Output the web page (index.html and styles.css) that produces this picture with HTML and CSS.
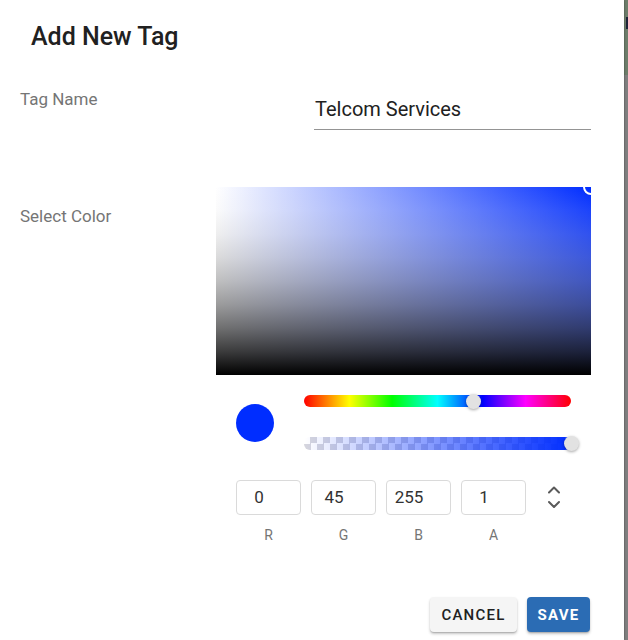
FILE: index.html
```html
<!DOCTYPE html>
<html lang="en">
<head>
<meta charset="utf-8">
<title>Add New Tag</title>
<link rel="stylesheet" href="styles.css">
</head>
<body>
<div class="page">
  <div class="dialog">
    <h2 class="title">Add New Tag</h2>
    <div class="row row-name">
      <div class="label">Tag Name</div>
      <div class="field">Telcom Services</div>
    </div>
    <div class="row row-color">
      <div class="label label-color">Select Color</div>
      <div class="picker">
        <div class="sv"><span class="sv-pointer"></span></div>
        <div class="controls">
          <span class="swatch"></span>
          <div class="sliders">
            <div class="hue"><span class="thumb thumb-hue"></span></div>
            <div class="alpha"><span class="thumb thumb-alpha"></span></div>
          </div>
        </div>
        <div class="inputs">
          <div class="chan"><div class="box">0</div><div class="chan-label">R</div></div>
          <div class="chan"><div class="box">45</div><div class="chan-label">G</div></div>
          <div class="chan"><div class="box">255</div><div class="chan-label">B</div></div>
          <div class="chan"><div class="box">1</div><div class="chan-label">A</div></div>
          <svg class="toggle" width="12" height="22" viewBox="0 0 12 22">
            <path d="M1 6.5 L6 1.5 L11 6.5" fill="none" stroke="#5a5a5a" stroke-width="2" stroke-linecap="round" stroke-linejoin="round"/>
            <path d="M1 16 L6 21 L11 16" fill="none" stroke="#5a5a5a" stroke-width="2" stroke-linecap="round" stroke-linejoin="round"/>
          </svg>
        </div>
      </div>
    </div>
    <div class="actions">
      <button class="btn btn-cancel">Cancel</button>
      <button class="btn btn-save">Save</button>
    </div>
  </div>
  <div class="backdrop"></div>
</div>
</body>
</html>
```

FILE: styles.css
```css
body {
  margin: 0;
  font-family: Roboto, "Liberation Sans", sans-serif;
}

.page {
  display: flex;
  width: 628px;
  height: 640px;
  overflow: hidden;
}

.dialog {
  width: 624px;
  height: 640px;
  flex: none;
  background: #fff;
  display: flex;
  flex-direction: column;
  box-shadow: 0 0 2px rgba(0, 0, 0, 0.45);
  position: relative;
  z-index: 1;
}

.title {
  margin: 22px 0 0 31px;
  font-size: 25px;
  line-height: 29px;
  font-weight: 500;
  color: #212121;
}

.row {
  display: flex;
  justify-content: space-between;
  align-items: flex-start;
  padding: 0 33px 0 20px;
}

.row-name {
  margin-top: 38px;
}

.label {
  font-size: 17px;
  line-height: 20px;
  color: #757575;
}

.field {
  width: 276px;
  padding: 8px 0 8px 1px;
  border-bottom: 1px solid #949494;
  font-size: 20px;
  line-height: 24px;
  color: #212121;
}

.row-color {
  margin-top: 57px;
}

.label-color {
  margin-top: 19px;
}

.picker {
  width: 375px;
}

.sv {
  position: relative;
  height: 188px;
  overflow: hidden;
  background:
    linear-gradient(to bottom,
      rgba(255, 255, 255, 0) 0%,
      rgba(223, 223, 223, 0.125) 12.5%,
      rgba(191, 191, 191, 0.25) 25%,
      rgba(159, 159, 159, 0.375) 37.5%,
      rgba(128, 128, 128, 0.5) 50%,
      rgba(96, 96, 96, 0.625) 62.5%,
      rgba(64, 64, 64, 0.75) 75%,
      rgba(32, 32, 32, 0.875) 87.5%,
      rgba(0, 0, 0, 1) 100%),
    linear-gradient(to right, rgba(255, 255, 255, 1), rgba(255, 255, 255, 0)),
    rgb(0, 45, 255);
}

.sv-pointer {
  position: absolute;
  top: -8px;
  right: -8px;
  width: 12px;
  height: 12px;
  border: 2px solid #fff;
  border-radius: 50%;
  box-shadow: 0 0 1px rgba(0, 0, 0, 0.4);
}

.controls {
  display: flex;
  align-items: center;
  gap: 30px;
  padding-left: 20px;
  margin-top: 20px;
}

.swatch {
  flex: none;
  width: 38px;
  height: 38px;
  border-radius: 50%;
  background: rgb(0, 45, 255);
}

.sliders {
  width: 267px;
  display: flex;
  flex-direction: column;
  gap: 30px;
}

.hue {
  position: relative;
  height: 12px;
  border-radius: 6px;
  background: linear-gradient(to right, #f00 0%, #ff0 17%, #0f0 33%, #0ff 50%, #00f 67%, #f0f 83%, #f00 100%);
}

.alpha {
  position: relative;
  height: 13px;
  border-radius: 6px;
  background:
    linear-gradient(to right, rgba(0, 45, 255, 0), rgb(0, 45, 255)),
    repeating-conic-gradient(#d6d6de 0 25%, #fff 0 50%) 0 0 / 13px 13px;
}

.thumb {
  position: absolute;
  top: 50%;
  width: 15px;
  height: 15px;
  margin-top: -7.5px;
  border-radius: 50%;
  background: #e2e2e2;
  box-shadow: 0 1px 3px rgba(0, 0, 0, 0.35);
}

.thumb-hue {
  left: calc(63.6% - 7.5px);
}

.thumb-alpha {
  left: calc(100% - 7.5px);
}

.inputs {
  display: flex;
  align-items: flex-start;
  gap: 10px;
  padding-left: 20px;
  margin-top: 30px;
}

.chan {
  width: 65px;
  display: flex;
  flex-direction: column;
  align-items: center;
}

.box {
  box-sizing: border-box;
  width: 65px;
  height: 35px;
  border: 1px solid #dadada;
  border-radius: 4px;
  padding-right: 19px;
  font-size: 17px;
  line-height: 33px;
  text-align: center;
  color: #333;
}

.chan-label {
  margin-top: 12px;
  font-size: 14px;
  line-height: 17px;
  color: #757575;
}

.toggle {
  flex: none;
  margin: 6px 0 0 12px;
}

.actions {
  margin-top: auto;
  display: flex;
  justify-content: flex-end;
  gap: 10px;
  padding: 0 34px 8px 0;
}

.btn {
  height: 35px;
  padding: 0;
  border: 0;
  border-radius: 4px;
  font-family: inherit;
  font-size: 15px;
  font-weight: 500;
  letter-spacing: 1.25px;
  text-transform: uppercase;
  box-shadow: 0 2px 3px rgba(0, 0, 0, 0.22), 0 1px 1px rgba(0, 0, 0, 0.14);
}

.btn-cancel {
  width: 87px;
  background: #f5f5f5;
  color: #212121;
}

.btn-save {
  width: 63px;
  background: #2b6cb4;
  color: #fff;
  font-weight: 700;
}

.backdrop {
  flex: 1;
  background:
    linear-gradient(#1e2338, #1e2338) right 0 top 17px / 2px 12px no-repeat,
    linear-gradient(to bottom, #6d7d6b 0, #6d7d6b 75px, #7f7f7f 75px);
}
```
